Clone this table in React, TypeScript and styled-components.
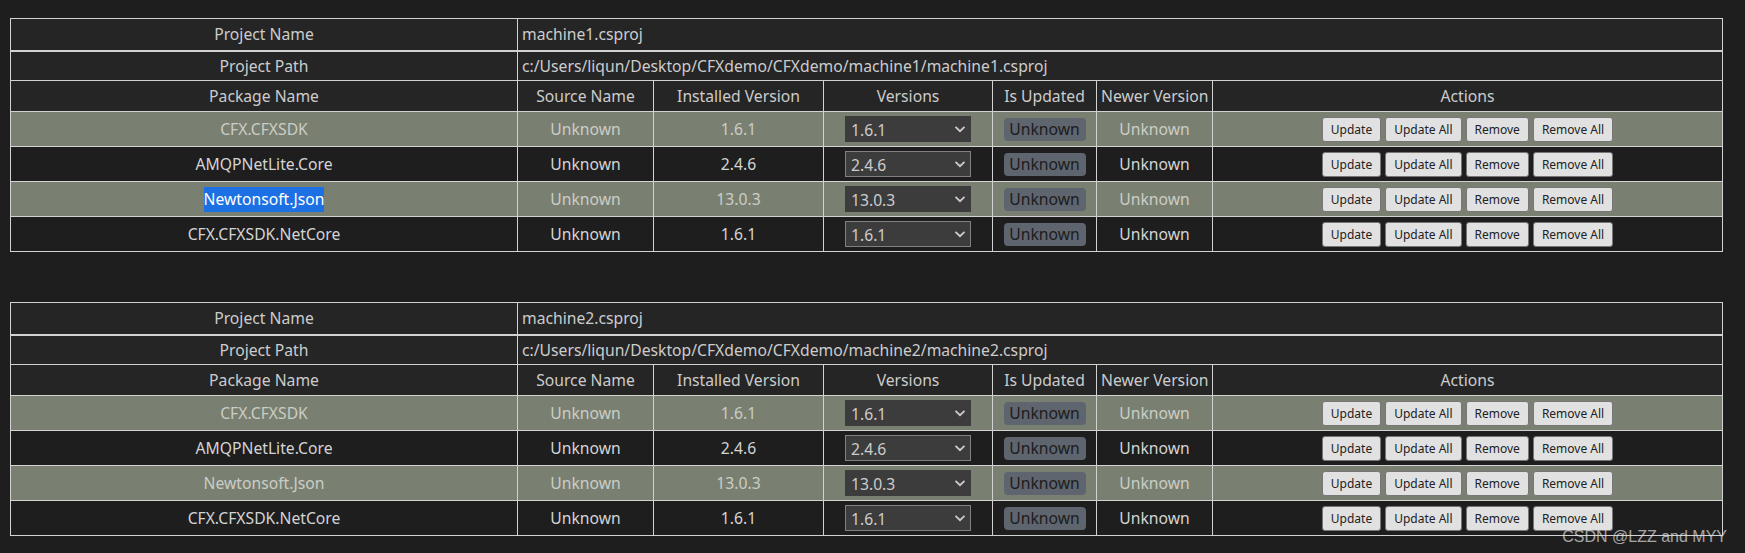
import React from "react";
import styled, { createGlobalStyle } from "styled-components";

const Global = createGlobalStyle`
  html, body { margin: 0; padding: 0; background: #1e1e1e; }
  body { font-family: "Noto Sans", "Open Sans", sans-serif; }
`;

const Page = styled.div`
  position: relative;
  box-sizing: border-box;
  width: 1745px;
  height: 553px;
  overflow: hidden;
  padding: 18px 0 0 10px;
  display: flex;
  flex-direction: column;
  gap: 50px;
`;

const Table = styled.table`
  border-collapse: collapse;
  table-layout: fixed;
  width: 1712px;
  font-size: 15.7px;
  color: #cccccc;
`;

const Cell = styled.td<{ $left?: boolean; $thick?: boolean }>`
  border: 1px solid #d2d2d2;
  ${(p) => (p.$thick ? "border-bottom-width: 2px;" : "")}
  padding: 0 4px;
  text-align: ${(p) => (p.$left ? "left" : "center")};
  vertical-align: middle;
  white-space: nowrap;
  overflow: hidden;
  font-weight: normal;
`;

const HeadRow = styled.tr<{ $h: number }>`
  height: ${(p) => p.$h}px;
  background: #252526;
  color: #cccccc;
`;

const DataRow = styled.tr<{ $alt: boolean }>`
  height: 35px;
  background: ${(p) => (p.$alt ? "#7a8071" : "#1e1e1e")};
  color: ${(p) => (p.$alt ? "#cacdc6" : "#d4d4d4")};
`;

const Selected = styled.span`
  display: inline-block;
  line-height: 25px;
  background: #1d6fe4;
  color: #ffffff;
`;

const SelectWrap = styled.div`
  position: relative;
  display: inline-block;
  width: 126px;
  height: 26px;
  vertical-align: middle;
`;

const Select = styled.select<{ $alt: boolean }>`
  appearance: none;
  -webkit-appearance: none;
  box-sizing: border-box;
  width: 126px;
  height: 26px;
  margin: 0;
  padding: 2px 20px 0 5px;
  background: #3c3c3c;
  color: #cccccc;
  border: 1px solid ${(p) => (p.$alt ? "#3c3c3c" : "#808080")};
  border-radius: 0;
  font-family: "Noto Sans", sans-serif;
  font-size: 15.7px;
  outline: none;
`;

const Chevron = styled.svg`
  position: absolute;
  right: 5px;
  top: 9px;
  pointer-events: none;
`;

const Badge = styled.span`
  display: inline-block;
  width: 82px;
  height: 23px;
  line-height: 23px;
  border-radius: 4px;
  background: #5e656e;
  color: #1c1c1c;
  text-align: center;
  vertical-align: middle;
`;

const Actions = styled.div`
  display: flex;
  justify-content: center;
  gap: 4px;
`;

const Button = styled.button`
  box-sizing: border-box;
  height: 25px;
  padding: 0 8px;
  margin: 0;
  background: #e1e1e1;
  color: #222222;
  border: 1px solid #767676;
  border-radius: 3px;
  font-family: "Noto Sans", sans-serif;
  font-size: 12px;
  line-height: 23px;
`;

const Watermark = styled.div`
  position: absolute;
  right: 18px;
  bottom: 7px;
  font-family: "Liberation Sans", Arial, sans-serif;
  font-size: 16px;
  color: rgba(225, 225, 225, 0.7);
  pointer-events: none;
`;

const widths = [507, 136, 170, 169, 104, 116, 510];

type Pkg = { name: string; version: string };

const packages: Pkg[] = [
  { name: "CFX.CFXSDK", version: "1.6.1" },
  { name: "AMQPNetLite.Core", version: "2.4.6" },
  { name: "Newtonsoft.Json", version: "13.0.3" },
  { name: "CFX.CFXSDK.NetCore", version: "1.6.1" },
];

const VersionSelect: React.FC<{ value: string; alt: boolean }> = ({ value, alt }) => (
  <SelectWrap>
    <Select $alt={alt} defaultValue={value}>
      <option value={value}>{value}</option>
    </Select>
    <Chevron width="12" height="8" viewBox="0 0 12 8">
      <path d="M1.5 1.8 L6 6.2 L10.5 1.8" fill="none" stroke="#cccccc" strokeWidth="1.8" />
    </Chevron>
  </SelectWrap>
);

const ProjectTable: React.FC<{ project: string; selectedRow?: number }> = ({ project, selectedRow }) => (
  <Table>
    <colgroup>
      {widths.map((w, i) => (
        <col key={i} style={{ width: w }} />
      ))}
    </colgroup>
    <tbody>
      <HeadRow $h={32}>
        <Cell as="th" $thick>Project Name</Cell>
        <Cell $left $thick colSpan={6}>{project}.csproj</Cell>
      </HeadRow>
      <HeadRow $h={30}>
        <Cell as="th">Project Path</Cell>
        <Cell $left colSpan={6}>
          c:/Users/liqun/Desktop/CFXdemo/CFXdemo/{project}/{project}.csproj
        </Cell>
      </HeadRow>
      <HeadRow $h={31}>
        <Cell as="th">Package Name</Cell>
        <Cell as="th">Source Name</Cell>
        <Cell as="th">Installed Version</Cell>
        <Cell as="th">Versions</Cell>
        <Cell as="th">Is Updated</Cell>
        <Cell as="th">Newer Version</Cell>
        <Cell as="th">Actions</Cell>
      </HeadRow>
      {packages.map((p, i) => {
        const alt = i % 2 === 0;
        return (
          <DataRow key={p.name} $alt={alt}>
            <Cell>{selectedRow === i ? <Selected>{p.name}</Selected> : p.name}</Cell>
            <Cell>Unknown</Cell>
            <Cell>{p.version}</Cell>
            <Cell>
              <VersionSelect value={p.version} alt={alt} />
            </Cell>
            <Cell>
              <Badge>Unknown</Badge>
            </Cell>
            <Cell>Unknown</Cell>
            <Cell>
              <Actions>
                <Button>Update</Button>
                <Button>Update All</Button>
                <Button>Remove</Button>
                <Button>Remove All</Button>
              </Actions>
            </Cell>
          </DataRow>
        );
      })}
    </tbody>
  </Table>
);

export default function App() {
  return (
    <>
      <Global />
      <Page>
        <ProjectTable project="machine1" selectedRow={2} />
        <ProjectTable project="machine2" />
        <Watermark>CSDN @LZZ and MYY</Watermark>
      </Page>
    </>
  );
}
